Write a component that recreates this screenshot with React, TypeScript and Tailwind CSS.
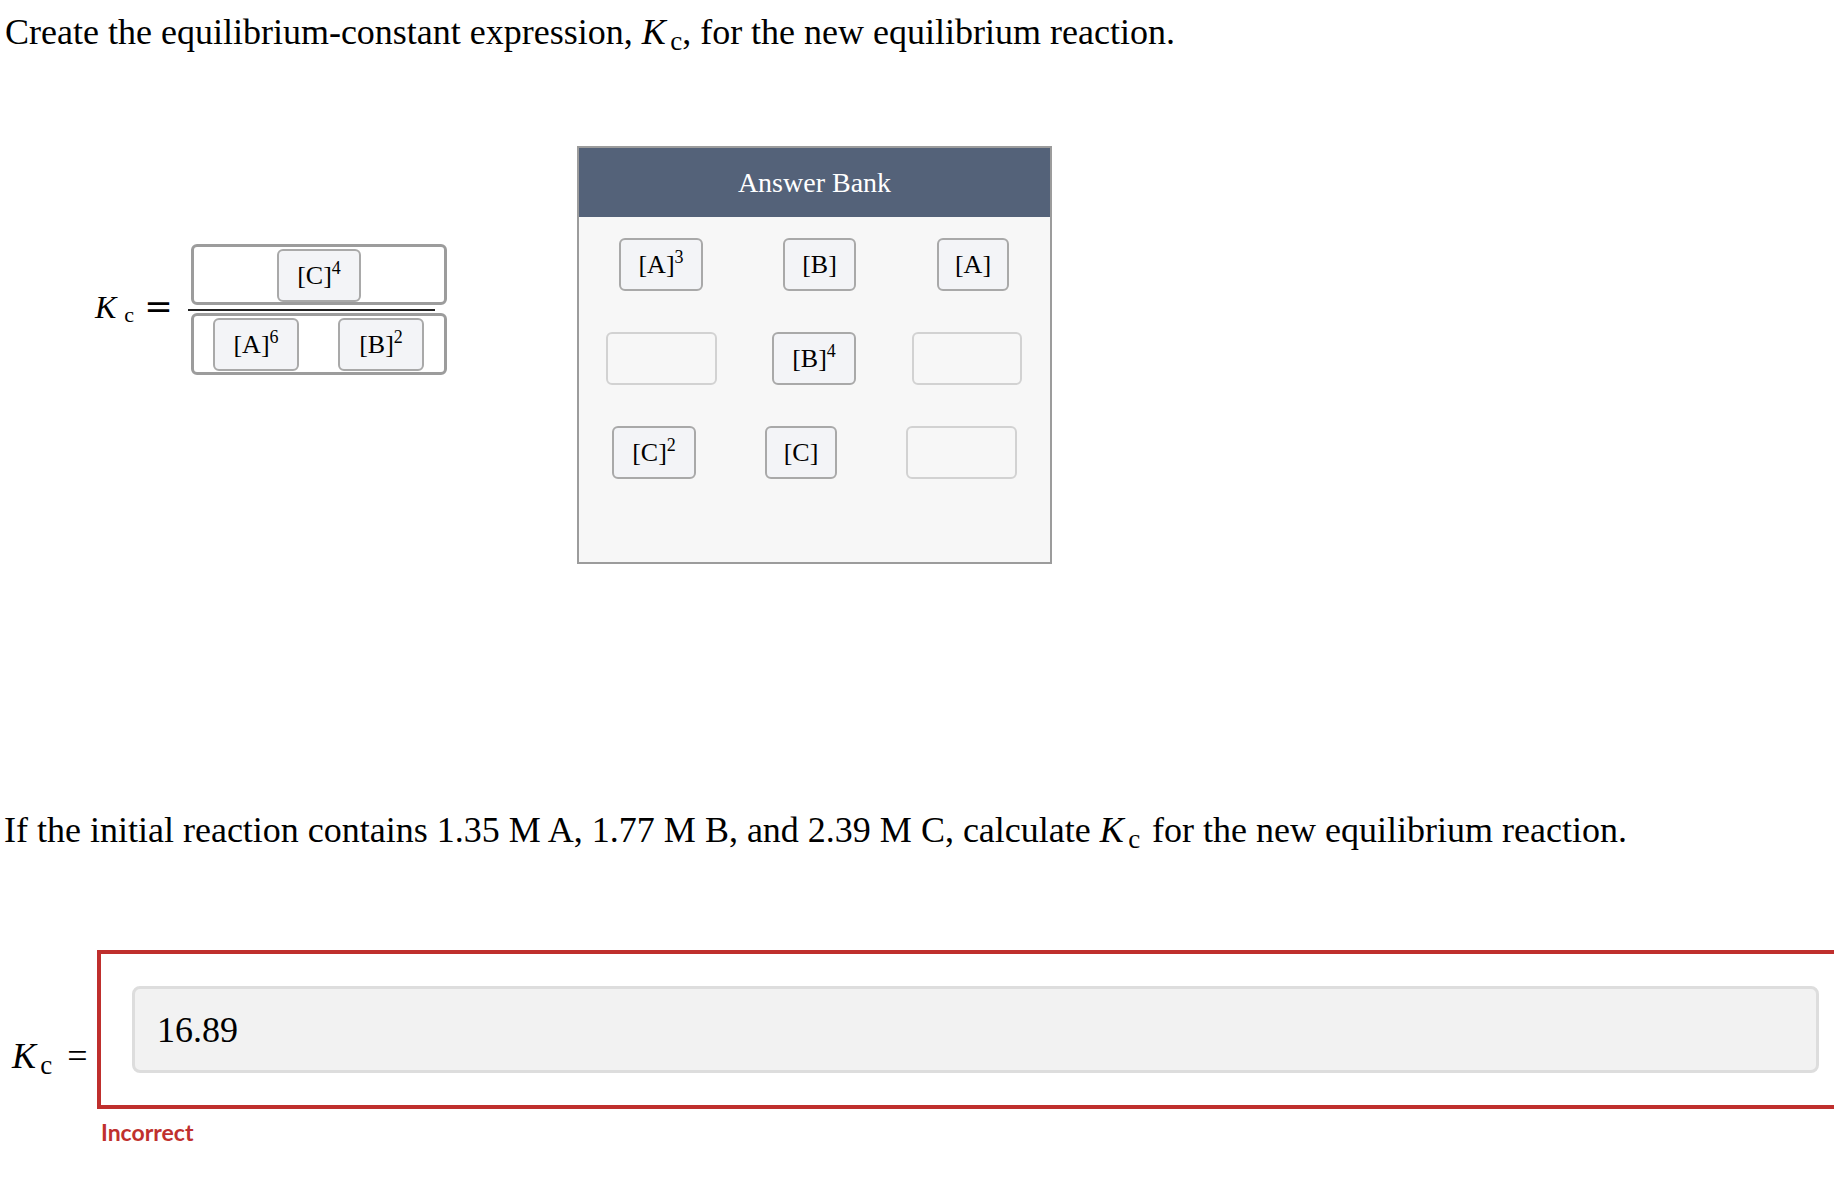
import React from "react";

function Kc({ size = "text-[36px]" }: { size?: string }) {
  return (
    <span className={`${size} whitespace-nowrap`}>
      <span className="italic">K</span>
      <span className="relative top-[0.22em] ml-[0.16em] text-[0.75em]">c</span>
    </span>
  );
}

function Tile({ base, sup, w, ml }: { base: string; sup?: string; w: string; ml: string }) {
  return (
    <div
      className={`${w} ${ml} h-[53px] shrink-0 flex items-center justify-center rounded-[6px] border-2 border-[#a9a9a9] bg-[#f3f4f7] text-[26px] leading-none`}
    >
      <span>
        {base}
        {sup && <sup className="text-[18px] top-[-0.55em]">{sup}</sup>}
      </span>
    </div>
  );
}

function Empty({ w, ml }: { w: string; ml: string }) {
  return <div className={`${w} ${ml} h-[53px] shrink-0 rounded-[6px] border-2 border-[#d2d2d2] bg-[#f7f7f7]`} />;
}

export default function App() {
  return (
    <div className="min-h-screen overflow-hidden bg-white text-black font-['Liberation_Serif','Times_New_Roman',serif]">
      <p className="pl-[5px] pt-[11px] text-[36px] leading-[43px]">
        Create the equilibrium-constant expression, <Kc />, for the new equilibrium reaction.
      </p>

      <div className="mt-[89px] flex items-start">
        {/* Kc = fraction */}
        <div className="ml-[95px] mt-[98px] flex items-center">
          <span className="w-[50px] mb-[6px] text-[32px] leading-none whitespace-nowrap">
            <span className="italic">K</span>
            <span className="relative top-[0.22em] ml-[8px] text-[22px]">c</span>
          </span>
          <span className="w-[27px] mb-[8px] flex justify-center font-['DejaVu_Sans',sans-serif] text-[34px] leading-none">
            =
          </span>
          <div className="ml-[16px] flex flex-col">
            <div className="ml-[3px] w-[256px] h-[61px] rounded-[6px] border-[3px] border-[#9c9c9c] flex items-start pt-[2px]">
              <Tile base="[C]" sup="4" w="w-[84px]" ml="ml-[83px]" />
            </div>
            <div className="mt-[4px] h-[2px] w-[247px] bg-[#222]" />
            <div className="mt-[2px] ml-[3px] w-[256px] h-[62px] rounded-[6px] border-[3px] border-[#9c9c9c] flex items-start pt-[2px]">
              <Tile base="[A]" sup="6" w="w-[86px]" ml="ml-[19px]" />
              <Tile base="[B]" sup="2" w="w-[86px]" ml="ml-[39px]" />
            </div>
          </div>
        </div>

        {/* Answer bank */}
        <div className="ml-[130px] w-[475px] h-[418px] border-2 border-[#9c9c9c] bg-[#f7f7f7]">
          <div className="h-[69px] bg-[#546279] flex items-center justify-center text-white text-[28px]">
            Answer Bank
          </div>
          <div className="pt-[21px] flex flex-col gap-[41px]">
            <div className="flex">
              <Tile base="[A]" sup="3" w="w-[84px]" ml="ml-[40px]" />
              <Tile base="[B]" w="w-[73px]" ml="ml-[80px]" />
              <Tile base="[A]" w="w-[72px]" ml="ml-[81px]" />
            </div>
            <div className="flex">
              <Empty w="w-[111px]" ml="ml-[27px]" />
              <Tile base="[B]" sup="4" w="w-[84px]" ml="ml-[55px]" />
              <Empty w="w-[110px]" ml="ml-[56px]" />
            </div>
            <div className="flex">
              <Tile base="[C]" sup="2" w="w-[84px]" ml="ml-[33px]" />
              <Tile base="[C]" w="w-[72px]" ml="ml-[69px]" />
              <Empty w="w-[111px]" ml="ml-[69px]" />
            </div>
          </div>
        </div>
      </div>

      <p className="pl-[4px] mt-[245px] text-[36px] leading-[43px]">
        If the initial reaction contains 1.35 M A, 1.77 M B, and 2.39 M C, calculate <Kc />
        <span className="ml-[12px]">for the new equilibrium reaction.</span>
      </p>

      <div className="mt-[95px] flex">
        <div className="w-[97px] shrink-0 pl-[12px] pt-[85px] text-[36px] leading-[43px] whitespace-nowrap">
          <Kc /> <span className="ml-[6px]">=</span>
        </div>
        <div className="flex-1 min-w-0">
          <div className="w-[1800px] h-[159px] border-4 border-[#bf2f2d] pl-[31px] pt-[32px]">
            <div className="w-[1687px] h-[87px] rounded-[8px] border-[3px] border-[#dddddd] bg-[#f2f2f2] pl-[22px] flex items-center text-[36px]">
              16.89
            </div>
          </div>
          <div className="mt-[12px] pl-[4px] font-['Lato',sans-serif] font-bold text-[23px] leading-[22px] text-[#c0302e]">
            Incorrect
          </div>
        </div>
      </div>
    </div>
  );
}
